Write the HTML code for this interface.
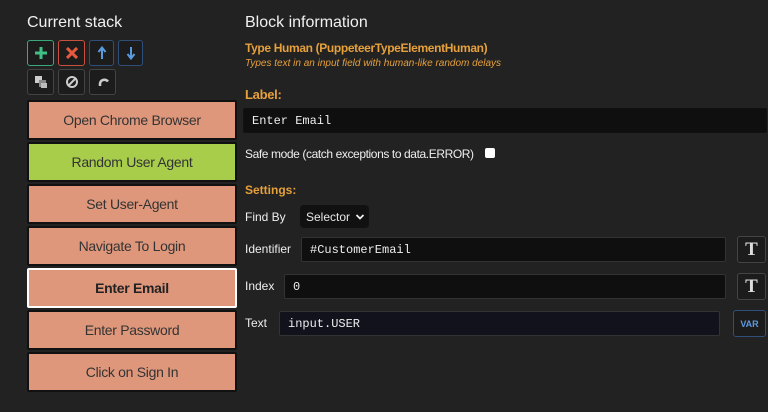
<!DOCTYPE html>
<html><head><meta charset="utf-8"><style>
*{box-sizing:border-box;margin:0;padding:0}
body{width:768px;height:412px;background:#222;font-family:"Liberation Sans",sans-serif;position:relative;overflow:hidden;color:#e8e8e8}
.a{position:absolute}
h2{position:absolute;font-weight:normal;font-size:16px;color:#f0f0f0}
.btn{position:absolute;border:1px solid #444;border-radius:3px;background:#1c1c1c;display:flex;align-items:center;justify-content:center}
.blk{position:absolute;left:27px;width:210px;height:40px;background:#df977c;border:2px solid #111;border-radius:2px;color:#333;font-size:14px;letter-spacing:-0.3px;display:flex;align-items:center;justify-content:center}
.or{color:#e6a03c;font-weight:bold;font-size:13px}
.inp{position:absolute;background:#0f0f0f;border:1px solid #333;border-radius:2px;font-family:"Liberation Mono",monospace;font-size:12px;color:#eee;padding-left:8px;display:flex;align-items:center}
.lbl{position:absolute;font-size:12px;color:#eee}
.tb{position:absolute;width:29px;height:27px;border:1px solid #444;border-radius:3px;background:#1c1c1c;color:#ddd;font-family:"Liberation Serif",serif;font-weight:bold;font-size:19px;display:flex;align-items:center;justify-content:center}
</style></head><body>
<h2 style="left:27px;top:14px">Current stack</h2>
<div class="btn" style="left:27px;top:40px;width:27px;height:26px;border-color:#3aa877"><svg width="14" height="14"><path d="M7 1v12M1 7h12" stroke="#3fc084" stroke-width="3"/></svg></div>
<div class="btn" style="left:58px;top:40px;width:27px;height:26px;border-color:#c9503a"><svg width="12" height="12"><path d="M1 1l10 10M11 1L1 11" stroke="#e55a3e" stroke-width="3"/></svg></div>
<div class="btn" style="left:89px;top:40px;width:25px;height:26px;border-color:#2f4f7a"><svg width="10" height="14"><path d="M5 13V3M1.5 6L5 1.5 8.5 6" stroke="#5c9ae0" stroke-width="2" fill="none"/></svg></div>
<div class="btn" style="left:118px;top:40px;width:25px;height:26px;border-color:#2f4f7a"><svg width="10" height="14"><path d="M5 1v10M1.5 8L5 12.5 8.5 8" stroke="#5c9ae0" stroke-width="2" fill="none"/></svg></div>
<div class="btn" style="left:27px;top:69px;width:27px;height:26px"><svg width="14" height="14"><rect x="1" y="1" width="7" height="7" fill="#ccc"/><rect x="5" y="5" width="7" height="7" fill="#888"/><rect x="7" y="8" width="6" height="5" fill="#bbb"/></svg></div>
<div class="btn" style="left:58px;top:69px;width:27px;height:26px"><svg width="14" height="14"><circle cx="7" cy="7" r="5" stroke="#ccc" stroke-width="2" fill="none"/><path d="M3.5 10.5L10.5 3.5" stroke="#ccc" stroke-width="2"/></svg></div>
<div class="btn" style="left:89px;top:69px;width:27px;height:26px"><svg width="14" height="14"><path d="M4 11V8.5a4.5 4.5 0 0 1 8 -2" stroke="#ccc" stroke-width="2.5" fill="none"/></svg></div>
<div class="blk" style="top:100px">Open Chrome Browser</div>
<div class="blk" style="top:142px;background:#a7cd4a">Random User Agent</div>
<div class="blk" style="top:184px">Set User-Agent</div>
<div class="blk" style="top:226px">Navigate To Login</div>
<div class="blk" style="top:268px;border-color:#fff;font-weight:bold;color:#222">Enter Email</div>
<div class="blk" style="top:310px">Enter Password</div>
<div class="blk" style="top:352px">Click on Sign In</div>

<h2 style="left:245px;top:14px">Block information</h2>
<div class="a or" style="left:245px;top:41px;font-size:12px;letter-spacing:-0.35px">Type Human (PuppeteerTypeElementHuman)</div>
<div class="a" style="left:245px;top:58px;font-size:10px;font-style:italic;color:#e6a03c">Types text in an input field with human-like random delays</div>
<div class="a or" style="left:245px;top:87px;letter-spacing:-0.3px">Label:</div>
<div class="inp" style="left:243px;top:108px;width:524px;height:25px;border-color:#111">Enter Email</div>
<div class="lbl" style="left:245px;top:147px;letter-spacing:-0.4px">Safe mode (catch exceptions to data.ERROR)</div>
<div class="a" style="left:485px;top:148px;width:10px;height:10px;background:#fff;border-radius:2px"></div>
<div class="a or" style="left:245px;top:183px;font-size:12px">Settings:</div>
<div class="lbl" style="left:245px;top:210px">Find By</div>
<div class="a" style="left:300px;top:205px;width:69px;height:23px;background:#111;border-radius:4px;font-size:12px;display:flex;align-items:center;padding-left:6px">Selector <svg width="10" height="8" style="margin-left:5px"><path d="M1.5 2l3.5 3.5L8.5 2" stroke="#eee" stroke-width="1.8" fill="none"/></svg></div>
<div class="lbl" style="left:245px;top:242px">Identifier</div>
<div class="inp" style="left:301px;top:237px;width:425px;height:25px">#CustomerEmail</div>
<div class="tb" style="left:737px;top:236px">T</div>
<div class="lbl" style="left:245px;top:279px">Index</div>
<div class="inp" style="left:284px;top:274px;width:442px;height:25px">0</div>
<div class="tb" style="left:737px;top:273px">T</div>
<div class="lbl" style="left:245px;top:316px">Text</div>
<div class="inp" style="left:279px;top:311px;width:441px;height:25px;background:#11121c">input.USER</div>
<div class="a" style="left:733px;top:310px;width:33px;height:27px;border:1px solid #2f4f7a;border-radius:3px;background:#1c1c1c;color:#5c9ae0;font-size:9px;font-weight:bold;display:flex;align-items:center;justify-content:center">VAR</div>
</body></html>
